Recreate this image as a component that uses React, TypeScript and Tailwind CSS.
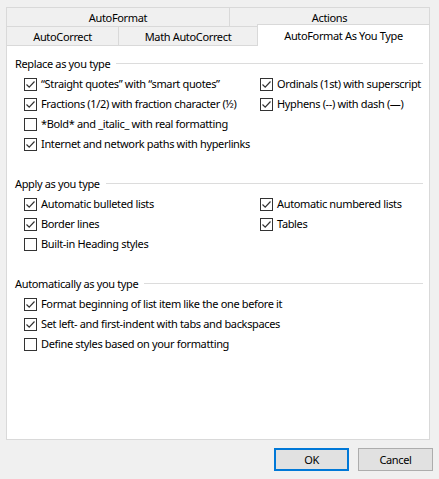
import React from "react";

type Item = { label: string; checked: boolean };

function CheckBox({ checked }: { checked: boolean }) {
  return (
    <span className="w-[13px] h-[13px] shrink-0 border border-[#333333] bg-white flex items-center justify-center">
      {checked && (
        <svg width="11" height="11" viewBox="0 0 11 11" fill="none">
          <path d="M1.5 5.5 L4.2 8.2 L9.5 2.5" stroke="#333333" strokeWidth="1.2" />
        </svg>
      )}
    </span>
  );
}

function Row({ item }: { item: Item }) {
  return (
    <div className="h-[20px] flex items-center gap-[4px] whitespace-nowrap">
      <CheckBox checked={item.checked} />
      <span className="-mt-[2px]">{item.label}</span>
    </div>
  );
}

function SectionHeader({ title }: { title: string }) {
  return (
    <div className="h-[16px] flex items-center gap-[6px] pr-[5px]">
      <span className="whitespace-nowrap">{title}</span>
      <div className="flex-1 h-px bg-[#dcdcdc]" />
    </div>
  );
}

function Section({
  title,
  left,
  right = [],
}: {
  title: string;
  left: Item[];
  right?: Item[];
}) {
  return (
    <div>
      <SectionHeader title={title} />
      <div className="mt-[3px] pl-[9px] flex">
        <div className="w-[236px] flex flex-col">
          {left.map((it) => (
            <Row key={it.label} item={it} />
          ))}
        </div>
        <div className="flex flex-col">
          {right.map((it) => (
            <Row key={it.label} item={it} />
          ))}
        </div>
      </div>
    </div>
  );
}

export default function App() {
  return (
    <div
      className="w-[439px] h-[479px] bg-[#f0f0f0] text-black text-[11px] tracking-[-0.35px] leading-none overflow-hidden"
      style={{ fontFamily: '"Noto Sans", "Liberation Sans", sans-serif' }}
    >
      <div className="ml-[6px] pt-[7px] w-[424px]">
        {/* back row of tabs */}
        <div className="flex h-[19px]">
          <div className="w-[223px] border-t border-l border-[#d9d9d9] flex items-center justify-center pt-px">
            AutoFormat
          </div>
          <div className="w-[201px] border-t border-l border-r border-[#d9d9d9] flex items-center justify-center pt-px">
            Actions
          </div>
        </div>
        {/* front row of tabs */}
        <div className="flex items-end h-[19px]">
          <div className="w-[112px] h-[19px] border-t border-l border-[#d9d9d9] flex items-center justify-center pt-px">
            AutoCorrect
          </div>
          <div className="w-[139px] h-[19px] border-t border-l border-[#d9d9d9] flex items-center justify-center pt-px">
            Math AutoCorrect
          </div>
          <div className="relative z-10 w-[173px] h-[22px] -mb-px bg-white border-t border-l border-r border-[#d9d9d9] flex items-center justify-center pb-[1px]">
            AutoFormat As You Type
          </div>
        </div>
        {/* page body */}
        <div className="h-[395px] bg-white border border-[#d9d9d9] pt-[9px] pl-[8px] pr-[1px]">
          <Section
            title="Replace as you type"
            left={[
              { label: "\u201CStraight quotes\u201D with \u201Csmart quotes\u201D", checked: true },
              { label: "Fractions (1/2) with fraction character (\u00BD)", checked: true },
              { label: "*Bold* and _italic_ with real formatting", checked: false },
              { label: "Internet and network paths with hyperlinks", checked: true },
            ]}
            right={[
              { label: "Ordinals (1st) with superscript", checked: true },
              { label: "Hyphens (--) with dash (\u2014)", checked: true },
            ]}
          />
          <div className="h-[21px]" />
          <Section
            title="Apply as you type"
            left={[
              { label: "Automatic bulleted lists", checked: true },
              { label: "Border lines", checked: true },
              { label: "Built-in Heading styles", checked: false },
            ]}
            right={[
              { label: "Automatic numbered lists", checked: true },
              { label: "Tables", checked: true },
            ]}
          />
          <div className="h-[21px]" />
          <Section
            title="Automatically as you type"
            left={[
              { label: "Format beginning of list item like the one before it", checked: true },
              { label: "Set left- and first-indent with tabs and backspaces", checked: true },
              { label: "Define styles based on your formatting", checked: false },
            ]}
          />
        </div>
      </div>
      <div className="flex justify-end gap-[9px] pr-[6px] mt-[8px]">
        <button className="w-[75px] h-[23px] bg-[#e1e1e1] border-2 border-[#0078d7] flex items-center justify-center">
          OK
        </button>
        <button className="w-[75px] h-[23px] bg-[#e1e1e1] border border-[#adadad] flex items-center justify-center">
          Cancel
        </button>
      </div>
    </div>
  );
}
